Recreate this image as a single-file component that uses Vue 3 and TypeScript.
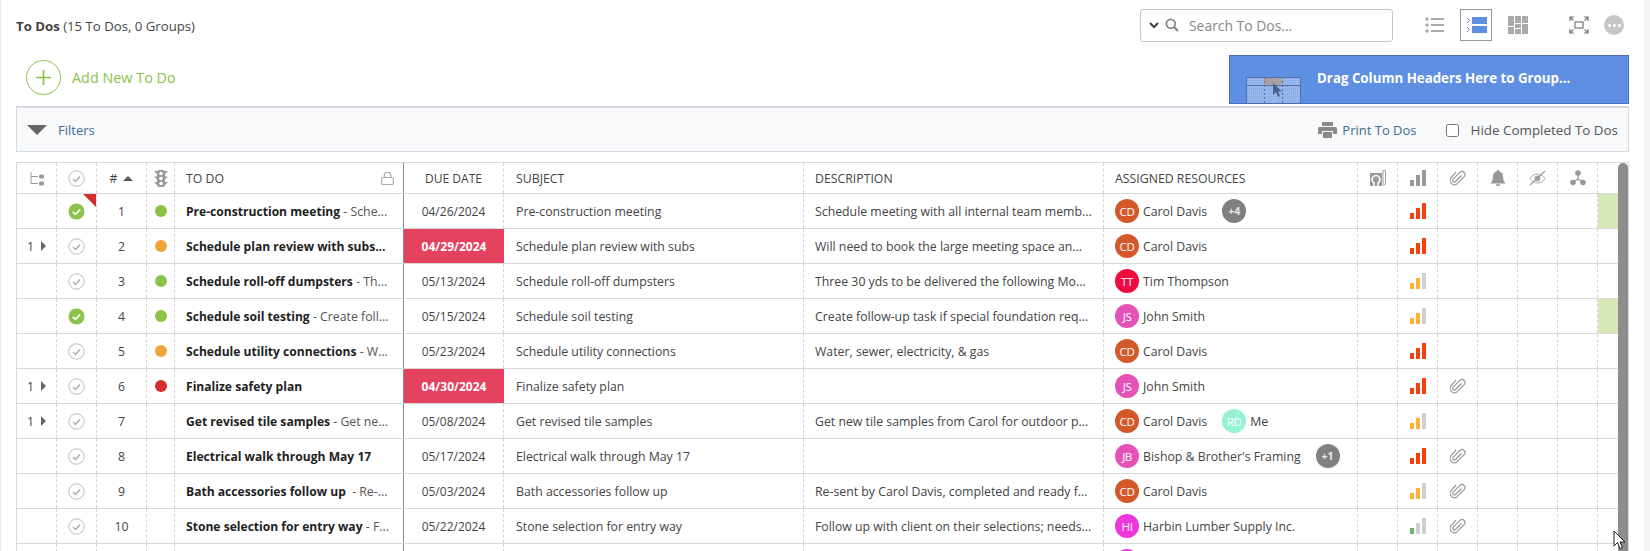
<script setup lang="ts">
interface Person {
  initials: string
  name: string
  color: string
}

interface Todo {
  id: number
  subs?: number
  done?: boolean
  flagged?: boolean
  status?: string
  title: string
  preview?: string
  due: string
  overdue?: boolean
  subject: string
  description: string
  people: Person[]
  more?: number
  priority: 'high' | 'medium' | 'low'
  attached?: boolean
  tinted?: boolean
}

const carol: Person = { initials: 'CD', name: 'Carol Davis', color: '#d4592a' }
const tim: Person = { initials: 'TT', name: 'Tim Thompson', color: '#ef0a40' }
const john: Person = { initials: 'JS', name: 'John Smith', color: '#e651b6' }
const me: Person = { initials: 'RD', name: 'Me', color: '#96f2d3' }
const bishop: Person = { initials: 'JB', name: "Bishop & Brother's Framing", color: '#e651b6' }
const harbin: Person = { initials: 'HI', name: 'Harbin Lumber Supply Inc.', color: '#ee37d8' }

const green = '#8bc34a'
const orange = '#f0a23c'
const red = '#d32f2f'

const todos: Todo[] = [
  { id: 1, done: true, flagged: true, status: green, title: 'Pre-construction meeting', preview: ' - Sche...', due: '04/26/2024', subject: 'Pre-construction meeting', description: 'Schedule meeting with all internal team memb...', people: [carol], more: 4, priority: 'high', tinted: true },
  { id: 2, subs: 1, status: orange, title: 'Schedule plan review with subs...', due: '04/29/2024', overdue: true, subject: 'Schedule plan review with subs', description: 'Will need to book the large meeting space an...', people: [carol], priority: 'high' },
  { id: 3, status: green, title: 'Schedule roll-off dumpsters', preview: ' - Th...', due: '05/13/2024', subject: 'Schedule roll-off dumpsters', description: 'Three 30 yds to be delivered the following Mo...', people: [tim], priority: 'medium' },
  { id: 4, done: true, status: green, title: 'Schedule soil testing', preview: ' - Create foll...', due: '05/15/2024', subject: 'Schedule soil testing', description: 'Create follow-up task if special foundation req...', people: [john], priority: 'medium', tinted: true },
  { id: 5, status: orange, title: 'Schedule utility connections', preview: ' - W...', due: '05/23/2024', subject: 'Schedule utility connections', description: 'Water, sewer, electricity, & gas', people: [carol], priority: 'high' },
  { id: 6, subs: 1, status: red, title: 'Finalize safety plan', due: '04/30/2024', overdue: true, subject: 'Finalize safety plan', description: '', people: [john], priority: 'high', attached: true },
  { id: 7, subs: 1, title: 'Get revised tile samples', preview: ' - Get ne...', due: '05/08/2024', subject: 'Get revised tile samples', description: 'Get new tile samples from Carol for outdoor p...', people: [carol, me], priority: 'medium' },
  { id: 8, title: 'Electrical walk through May 17', due: '05/17/2024', subject: 'Electrical walk through May 17', description: '', people: [bishop], more: 1, priority: 'high', attached: true },
  { id: 9, title: 'Bath accessories follow up ', preview: ' - Re-...', due: '05/03/2024', subject: 'Bath accessories follow up', description: 'Re-sent by Carol Davis, completed and ready f...', people: [carol], priority: 'medium', attached: true },
  { id: 10, title: 'Stone selection for entry way', preview: ' - F...', due: '05/22/2024', subject: 'Stone selection for entry way', description: 'Follow up with client on their selections; needs...', people: [harbin], priority: 'low', attached: true },
]

const barHeights = [6, 11, 16]

// how many of the three bars are lit for a priority
function barClass(priority: Todo['priority'], index: number): string {
  const lit = priority === 'high' ? 3 : priority === 'medium' ? 2 : 1
  return index < lit ? priority : 'off'
}
</script>

<template>
  <div class="page">
    <main class="content">
      <header class="top-bar">
        <div class="title"><b>To Dos</b> (15 To Dos, 0 Groups)</div>
        <div class="search">
          <svg width="10" height="7" viewBox="0 0 10 7"><path d="M1 1l4 4 4-4" fill="none" stroke="#444" stroke-width="2" /></svg>
          <svg width="14" height="14" viewBox="0 0 14 14"><circle cx="5.8" cy="5.8" r="4.4" fill="none" stroke="#888" stroke-width="1.8" /><path d="M9 9l4 4" stroke="#888" stroke-width="2.2" /></svg>
          <span>Search To Dos...</span>
        </div>
        <svg class="list-icon" width="19" height="18" viewBox="0 0 19 18">
          <g fill="#aaa">
            <circle cx="2" cy="3" r="1.7" /><circle cx="2" cy="9" r="1.7" /><circle cx="2" cy="15" r="1.7" />
            <rect x="6" y="2" width="13" height="2" /><rect x="6" y="8" width="13" height="2" /><rect x="6" y="14" width="13" height="2" />
          </g>
        </svg>
        <div class="view-btn">
          <svg width="21" height="18" viewBox="0 0 21 18">
            <path d="M1 2l2.500 2.500L1 7M1 11l2.500 2.500L1 16" fill="none" stroke="#5e8fe3" stroke-width="1" />
            <rect x="6" y="1" width="15" height="7" fill="#5e8fe3" /><rect x="6" y="10" width="15" height="7" fill="#5e8fe3" />
          </svg>
        </div>
        <svg class="board-icon" width="20" height="18" viewBox="0 0 20 18">
          <g fill="#aaa">
            <rect x="0" y="0" width="6" height="10" /><rect x="0" y="11" width="6" height="7" />
            <rect x="7" y="0" width="6" height="7" /><rect x="7" y="8" width="6" height="4" /><rect x="7" y="13" width="6" height="5" />
            <rect x="14" y="0" width="6" height="7" /><rect x="14" y="8" width="6" height="10" />
          </g>
        </svg>
        <svg class="expand-icon" width="20" height="18" viewBox="0 0 20 18">
          <g fill="none" stroke="#777" stroke-width="1.200">
            <rect x="6" y="6" width="8" height="6" />
            <path d="M1 5V1h4M1 1l3.500 3.500M15 1h4v4M19 1l-3.500 3.500M1 13v4h4M1 17l3.500-3.500M19 13v4h-4M19 17l-3.500-3.500" />
          </g>
        </svg>
        <div class="more-btn"><i /><i /><i /></div>
      </header>

      <section class="action-row">
        <button class="add-btn">
          <span class="add-circle">
            <svg width="15" height="15" viewBox="0 0 15 15"><path d="M7.500 0v15M0 7.500h15" stroke="#8bc34a" stroke-width="1.700" /></svg>
          </span>
          Add New To Do
        </button>
        <div class="group-drop">
          <svg class="group-art" width="55" height="26" viewBox="0 0 55 26">
            <defs>
              <pattern id="art-dots" width="2" height="2" patternUnits="userSpaceOnUse">
                <rect width="2" height="2" fill="#8dafe9" />
                <rect width="1" height="1" fill="#a9c3f0" />
              </pattern>
            </defs>
            <rect width="55" height="26" fill="url(#art-dots)" />
            <rect x="18" y="0" width="18" height="8" fill="#a89f9f" />
            <path d="M0 .5h55M0 8.500h55M54.500 0v26M.5 0v26" stroke="#5474ab" stroke-width="1" fill="none" />
            <path d="M18.500 0v26M36.500 0v26" stroke="#5474ab" stroke-width="1" fill="none" stroke-dasharray="2 2" />
            <path d="M27 6v12l3-3 2 5 2-1-2-4.500h4z" fill="#4c5f86" />
          </svg>
          <span>Drag Column Headers Here to Group...</span>
        </div>
      </section>

      <section class="filters">
        <span class="filter-arrow" />
        <span class="filter-label">Filters</span>
        <span class="print">
          <svg width="19" height="16" viewBox="0 0 19 16">
            <path d="M4 0h11v4H4zM1.500 5h16A1.500 1.500 0 0119 6.500V12h-4V9H4v3H0V6.500A1.500 1.500 0 011.500 5zM5 10h9v6H5z" fill="#8a8a8a" />
          </svg>
          Print To Dos
        </span>
        <label class="hide-done"><input type="checkbox" /> Hide Completed To Dos</label>
      </section>

      <section class="grid">
        <div class="row head">
          <div class="cell center">
            <svg width="14" height="15" viewBox="0 0 14 15"><path d="M1 1v11.500h7M1 5.500h7" fill="none" stroke="#999" stroke-width="1" /><rect x="9" y="3.500" width="5" height="4" rx="1.500" fill="#999" /><rect x="9" y="10.500" width="5" height="4" rx="1.500" fill="#999" /></svg>
          </div>
          <div class="cell center">
            <svg width="17" height="17" viewBox="0 0 17 17"><circle cx="8.500" cy="8.500" r="7.700" fill="none" stroke="#bbb" stroke-width="1" /><path d="M5 9l2.500 2.500L12 6.500" fill="none" stroke="#aaa" stroke-width="1.300" /></svg>
          </div>
          <div class="cell center">#<i class="sort-up" /></div>
          <div class="cell center">
            <svg width="14" height="17" viewBox="0 0 14 17"><rect x="3" y="0" width="8" height="17" rx="2" fill="#999" /><path d="M0 1h3v3zM14 1h-3v3zM0 6.500h3v3zM14 6.500h-3v3zM0 12h3v3zM14 12h-3v3z" fill="#999" /><circle cx="7" cy="3.500" r="1.800" fill="#fff" /><circle cx="7" cy="8.500" r="1.800" fill="#fff" /><circle cx="7" cy="13.500" r="1.800" fill="#fff" /></svg>
          </div>
          <div class="cell todo head-todo">
            <span>TO DO</span>
            <svg width="13" height="13" viewBox="0 0 13 13"><rect x=".600" y="5.500" width="11.800" height="7" rx="1.500" fill="none" stroke="#aaa" stroke-width="1.200" /><path d="M3.200 5.500V3.500a3.300 3.300 0 016.600 0v2" fill="none" stroke="#aaa" stroke-width="1.200" /></svg>
          </div>
          <div class="cell center date">DUE DATE</div>
          <div class="cell text subject">SUBJECT</div>
          <div class="cell text">DESCRIPTION</div>
          <div class="cell text">ASSIGNED RESOURCES</div>
          <div class="cell center">
            <svg width="16" height="16" viewBox="0 0 16 16">
              <rect x="0" y="3" width="12" height="13" fill="#999" />
              <path d="M4 16v-3a4 4 0 114 0v3" fill="none" stroke="#fff" stroke-width="1.500" />
              <path d="M13 14.500V.5h2.500v13.500L13 15.500" fill="none" stroke="#999" stroke-width=".9" />
            </svg>
          </div>
          <div class="cell center">
            <span class="bars">
              <i v-for="(h, b) in barHeights" :key="b" class="header-bar" :style="{ height: h + 'px' }" />
            </span>
          </div>
          <div class="cell center">
            <svg width="16" height="16" viewBox="0 0 16 16"><path d="M11.500 5.500l-6 6a1.600 1.600 0 01-2.300-2.300l7-7a3 3 0 014.200 4.200l-7.500 7.500a4.300 4.300 0 01-6-6L6 2" fill="none" stroke="#999" stroke-width="1.200" /></svg>
          </div>
          <div class="cell center">
            <svg width="16" height="16" viewBox="0 0 16 16"><path d="M8 0a1.300 1.300 0 011.300 1.400A4.600 4.600 0 0113 6c0 4 1 5.500 2.500 7.500H.5C2 11.500 3 10 3 6a4.600 4.600 0 013.700-4.600A1.300 1.300 0 018 0zM6 14.300h4a2 2 0 01-4 0z" fill="#999" /></svg>
          </div>
          <div class="cell center">
            <svg width="17" height="16" viewBox="0 0 17 16"><path d="M.700 8.500C3 5.500 5.500 4 8.500 4s5.500 1.500 7.800 4.500C14 11.500 11.500 13 8.500 13S3 11.500.700 8.500z" fill="none" stroke="#aaa" stroke-width="1" /><circle cx="8.500" cy="8.500" r="3" fill="#aaa" /><path d="M1 15L16 1" stroke="#999" stroke-width="1.100" /></svg>
          </div>
          <div class="cell center">
            <svg width="16" height="16" viewBox="0 0 16 16"><path d="M8 5v5M8 9l-5 3M8 9l5 3" stroke="#999" stroke-width="1.200" /><circle cx="8" cy="3" r="2.800" fill="#999" /><circle cx="3" cy="12.500" r="2.800" fill="#999" /><circle cx="13" cy="12.500" r="2.800" fill="#999" /></svg>
          </div>
          <div class="cell last" />
        </div>

        <div v-for="todo in todos" :key="todo.id" class="row">
          <div class="cell center subs">
            <template v-if="todo.subs">{{ todo.subs }}<i class="sub-arrow" /></template>
          </div>
          <div class="cell center">
            <svg v-if="todo.done" width="17" height="17" viewBox="0 0 17 17"><circle cx="8.500" cy="8.500" r="8" fill="#8bc34a" /><path d="M4.800 8.800l2.600 2.500 4.800-4.800" fill="none" stroke="#fff" stroke-width="1.800" /></svg>
            <svg v-else width="17" height="17" viewBox="0 0 17 17"><circle cx="8.500" cy="8.500" r="7.700" fill="none" stroke="#bbb" stroke-width="1" /><path d="M5 9l2.500 2.500L12 6.500" fill="none" stroke="#aaa" stroke-width="1.300" /></svg>
            <i v-if="todo.flagged" class="flag" />
          </div>
          <div class="cell center num">{{ todo.id }}</div>
          <div class="cell center"><i v-if="todo.status" class="dot" :style="{ background: todo.status }" /></div>
          <div class="cell todo"><span class="line"><b>{{ todo.title }}</b>{{ todo.preview }}</span></div>
          <div class="cell center date" :class="{ overdue: todo.overdue }">{{ todo.due }}</div>
          <div class="cell text subject">{{ todo.subject }}</div>
          <div class="cell text">{{ todo.description }}</div>
          <div class="cell text people">
            <span v-for="p in todo.people" :key="p.initials" class="person">
              <span class="avatar" :style="{ background: p.color }">{{ p.initials }}</span>{{ p.name }}
            </span>
            <span v-if="todo.more" class="avatar more">+{{ todo.more }}</span>
          </div>
          <div class="cell" />
          <div class="cell center">
            <span class="bars">
              <i v-for="(h, b) in barHeights" :key="b" :class="barClass(todo.priority, b)" :style="{ height: h + 'px' }" />
            </span>
          </div>
          <div class="cell center">
            <svg v-if="todo.attached" width="16" height="16" viewBox="0 0 16 16"><path d="M11.500 5.500l-6 6a1.600 1.600 0 01-2.300-2.300l7-7a3 3 0 014.200 4.200l-7.500 7.500a4.300 4.300 0 01-6-6L6 2" fill="none" stroke="#999" stroke-width="1.200" /></svg>
          </div>
          <div class="cell" />
          <div class="cell" />
          <div class="cell" />
          <div class="cell last" :class="{ tinted: todo.tinted }" />
        </div>

        <!-- next row is cut off by the window -->
        <div class="row">
          <div class="cell" /><div class="cell" /><div class="cell" /><div class="cell" /><div class="cell todo" />
          <div class="cell date" /><div class="cell" /><div class="cell" />
          <div class="cell text people"><span class="avatar" style="background: #ee37d8" /></div>
          <div class="cell" /><div class="cell" /><div class="cell" /><div class="cell" /><div class="cell" /><div class="cell" />
          <div class="cell last" />
        </div>

        <div class="scroll-thumb" />
      </section>

      <svg class="cursor" width="13" height="20" viewBox="0 0 13 20">
        <path d="M1 1v15l3.500-3.500L7 18.500l2.500-1-2.500-5.500h5z" fill="#fff" stroke="#222" stroke-width="1" />
      </svg>
    </main>
    <aside class="side-strip" />
  </div>
</template>

<style>
html,
body {
  margin: 0;
  height: 551px;
  overflow: hidden;
  background: #fff;
}
</style>

<style scoped>
.page {
  display: flex;
  height: 551px;
  overflow: hidden;
  font-family: "Open Sans", "Noto Sans", sans-serif;
  font-size: 12.3px;
  color: #444;
  border-left: 1px solid #eaeaea;
  box-sizing: border-box;
}

.content {
  position: relative;
  flex: 1;
  min-width: 0;
  padding: 0 15px;
}

.side-strip {
  width: 6px;
  background: #f5f5f5;
}

.top-bar {
  display: flex;
  align-items: center;
  height: 50px;
  padding-right: 5px;
}

.title {
  flex: 1;
  padding-top: 2px;
  font-size: 13.2px;
  color: #444;
}

.search {
  display: flex;
  align-items: center;
  gap: 6px;
  box-sizing: border-box;
  width: 253px;
  height: 33px;
  padding-left: 8px;
  border: 1px solid #c6c6c6;
  border-radius: 3px;
  color: #888;
}

.search span {
  margin-left: 4px;
  font-size: 13.9px;
}

.list-icon {
  margin-left: 32px;
}

.view-btn {
  display: flex;
  align-items: center;
  justify-content: center;
  box-sizing: border-box;
  width: 32px;
  height: 32px;
  margin-left: 16px;
  border: 1px solid #999;
}

.board-icon {
  margin-left: 16px;
}

.expand-icon {
  margin-left: 41px;
}

.more-btn {
  display: flex;
  align-items: center;
  justify-content: center;
  gap: 2px;
  width: 20px;
  height: 20px;
  margin-left: 15px;
  border-radius: 50%;
  background: #c6c6c6;
}

.more-btn i {
  width: 3px;
  height: 3px;
  border-radius: 50%;
  background: #fff;
}

.action-row {
  display: flex;
  justify-content: space-between;
  align-items: flex-start;
  height: 49px;
  margin-top: 5px;
}

.add-btn {
  display: flex;
  align-items: center;
  gap: 11px;
  margin: 5px 0 0 10px;
  padding: 0;
  border: 0;
  background: none;
  font: inherit;
  font-size: 14.4px;
  color: #8bc34a;
}

.add-circle {
  display: flex;
  align-items: center;
  justify-content: center;
  box-sizing: border-box;
  width: 35px;
  height: 35px;
  border: 1px solid #8bc34a;
  border-radius: 50%;
}

.group-drop {
  display: flex;
  align-items: flex-end;
  box-sizing: border-box;
  width: 400px;
  height: 49px;
  padding-left: 16px;
  background: #5e8fe3;
  border: 1px solid #4a6fb5;
  color: #fff;
  font-weight: 700;
  font-size: 13.3px;
}

.group-art {
  display: block;
}

.group-drop span {
  margin: 0 0 16px 16px;
}

.filters {
  display: flex;
  align-items: center;
  box-sizing: border-box;
  height: 46px;
  margin-top: 2px;
  padding: 1px 10px 0;
  background: #f8f9fb;
  border: 1px solid #d6dade;
  border-top-width: 2px;
  font-size: 13px;
}

.filter-arrow {
  width: 0;
  height: 0;
  border-left: 10px solid transparent;
  border-right: 10px solid transparent;
  border-top: 10px solid #666;
}

.filter-label {
  flex: 1;
  margin-left: 11px;
  color: #3d6d92;
}

.print {
  display: flex;
  align-items: center;
  gap: 5px;
  color: #3d6d92;
}

.hide-done {
  display: flex;
  align-items: center;
  gap: 12px;
  margin-left: 29px;
  color: #555;
  font-size: 13.4px;
}

.hide-done input {
  margin: 0;
}

.grid {
  position: relative;
  margin-top: 10px;
  border: 1px solid #d9d9d9;
  border-bottom: 0;
}

.row {
  display: grid;
  grid-template-columns: 40px 40px 50px 28px 229px 100px 300px 300px 254px repeat(6, 40px) 1fr;
  height: 35px;
  box-sizing: border-box;
  border-bottom: 1px solid #d9d9d9;
}

.head {
  height: 31px;
}

.cell {
  position: relative;
  display: flex;
  align-items: center;
  box-sizing: border-box;
  min-width: 0;
  border-right: 1px dashed #d5d5d5;
  white-space: pre;
}

.cell.last {
  border-right: 0;
}

.center {
  justify-content: center;
}

.text {
  padding-left: 11px;
}

.subject {
  padding-left: 12px;
}

.todo {
  padding-left: 11px;
  border-right: 1px solid #888;
}

.head-todo {
  justify-content: space-between;
  padding-right: 9px;
}

.line {
  color: #555;
}

.line b {
  color: #222;
  font-size: 12.1px;
}

.date {
  font-size: 12px;
  color: #444;
}

.overdue {
  background: #e5425f;
  color: #fff;
  font-weight: 700;
  border-right: 0;
}

.tinted {
  background: #d7e8b8;
}

.num {
  color: #444;
}

.subs {
  gap: 7px;
}

.sub-arrow {
  width: 0;
  height: 0;
  border-left: 5px solid #666;
  border-top: 5px solid transparent;
  border-bottom: 5px solid transparent;
}

.sort-up {
  width: 0;
  height: 0;
  margin-left: 6px;
  border-left: 5px solid transparent;
  border-right: 5px solid transparent;
  border-bottom: 5px solid #555;
}

.flag {
  position: absolute;
  top: 0;
  right: 0;
  width: 13px;
  height: 13px;
  background: #d32f2f;
  clip-path: polygon(0 0, 100% 0, 100% 100%);
}

.dot {
  width: 12px;
  height: 12px;
  border-radius: 50%;
}

.people {
  gap: 15px;
  overflow: hidden;
}

.person {
  display: flex;
  align-items: center;
  gap: 4px;
}

.avatar {
  display: flex;
  align-items: center;
  justify-content: center;
  flex: none;
  width: 24px;
  height: 24px;
  border-radius: 50%;
  color: #fff;
  font-size: 11.5px;
  letter-spacing: -0.4px;
}

.more {
  background: #808080;
  color: #e8e8e8;
  font-weight: 700;
  font-size: 10.5px;
  letter-spacing: 0;
}

.bars {
  display: flex;
  align-items: flex-end;
  gap: 2px;
  height: 16px;
}

.bars i {
  width: 4px;
}

.header-bar {
  background: #999;
}

.bars .high {
  background: #f4400a;
}

.bars .medium {
  background: #ffb02e;
}

.bars .low {
  background: #66bb6a;
}

.bars .off {
  background: #cdd0d2;
}

.scroll-thumb {
  position: absolute;
  top: 0;
  right: 0;
  bottom: 0;
  width: 10px;
  border-radius: 5px 5px 0 0;
  background: #8e8c8c;
}

.cursor {
  position: absolute;
  top: 530px;
  left: 1612px;
}
</style>
